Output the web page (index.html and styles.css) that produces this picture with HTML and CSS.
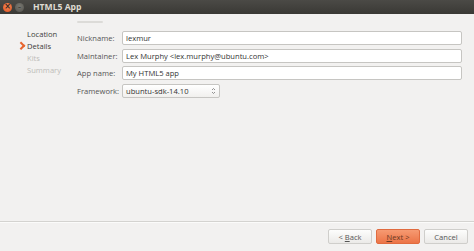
FILE: index.html
```html
<!DOCTYPE html>
<html>

<head>
  <meta charset="utf-8">
  <title>HTML5 App</title>
  <link rel="stylesheet" href="styles.css">
</head>

<body>
  <div class="window">
    <div class="titlebar">
      <span class="btn-close">&#215;</span>
      <span class="btn-min">&#8211;</span>
      <span class="title">HTML5 App</span>
    </div>
    <div class="main">
      <ul class="steps">
        <li>Location</li>
        <li class="current">Details</li>
        <li class="todo">Kits</li>
        <li class="todo">Summary</li>
      </ul>
      <div class="page">
        <div class="page-head"></div>
        <div class="form">
          <label>Nickname:</label>
          <div class="field">lexmur</div>
          <label>Maintainer:</label>
          <div class="field">Lex Murphy &lt;lex.murphy@ubuntu.com&gt;</div>
          <label>App name:</label>
          <div class="field">My HTML5 app</div>
          <label>Framework:</label>
          <div class="combo">
            <span>ubuntu-sdk-14.10</span>
            <svg width="5" height="8" viewBox="0 0 5 8">
              <path d="M1 3 L2.5 1.5 L4 3" fill="none" stroke="#777" stroke-width="0.8" />
              <path d="M1 5 L2.5 6.5 L4 5" fill="none" stroke="#777" stroke-width="0.8" />
            </svg>
          </div>
        </div>
      </div>
    </div>
    <div class="footer">
      <button>&lt; <u>B</u>ack</button>
      <button class="primary"><u>N</u>ext &gt;</button>
      <button>Cancel</button>
    </div>
  </div>
</body>

</html>
```

FILE: styles.css
```css
html,
body {
  margin: 0;
  width: 474px;
  height: 251px;
  overflow: hidden;
}

body {
  background: #f2f1f0;
  font-family: "Open Sans", "Noto Sans", sans-serif;
  font-size: 7.6px;
  color: #3c3c3c;
}

.window {
  height: 251px;
  display: flex;
  flex-direction: column;
}

.titlebar {
  height: 14px;
  background: linear-gradient(#4b4a46, #3a3935);
  display: flex;
  align-items: center;
  padding-left: 3px;
  box-sizing: border-box;
}

.btn-close,
.btn-min {
  width: 9px;
  height: 9px;
  border-radius: 50%;
  display: flex;
  align-items: center;
  justify-content: center;
  font-size: 8px;
  line-height: 1;
  font-family: "DejaVu Sans", sans-serif;
  font-weight: bold;
}

.btn-close {
  background: radial-gradient(circle at 50% 35%, #f58a5b, #e0521e);
  color: #3c2a20;
}

.btn-min {
  margin-left: 3px;
  background: radial-gradient(circle at 50% 35%, #77766f, #55544f);
  color: #3a3935;
  font-size: 6px;
}

.title {
  margin-left: 9px;
  color: #dfdbd2;
  font-weight: bold;
  font-size: 8.6px;
}

.main {
  flex: 1;
  display: flex;
}

.steps {
  list-style: none;
  margin: 0;
  padding: 14px 0 0 27px;
  width: 50px;
}

.steps li {
  line-height: 12px;
  position: relative;
}

/* orange chevron next to the current step */
.steps li.current::before {
  content: '';
  position: absolute;
  left: -9px;
  top: 3px;
  width: 3.5px;
  height: 3.5px;
  border-right: 2px solid #e8652f;
  border-bottom: 2px solid #e8652f;
  transform: rotate(-45deg);
}

.steps li.todo {
  color: #bdbcb9;
}

.page {
  flex: 1;
  padding-right: 12px;
}

.page-head {
  margin-top: 7px;
  width: 26px;
  height: 2px;
  background: #dcdbd8;
  border-radius: 1px;
}

.form {
  margin-top: 8px;
  display: grid;
  grid-template-columns: 45px 1fr;
  row-gap: 3.5px;
  align-items: center;
}

.form label {
  color: #555;
}

.field {
  height: 14px;
  box-sizing: border-box;
  border: 1px solid #c6c5c2;
  border-radius: 2px;
  background: #fff;
  padding-left: 3px;
  line-height: 12px;
  color: #333;
}

.combo {
  width: 98px;
  height: 14px;
  box-sizing: border-box;
  border: 1px solid #c6c5c2;
  border-radius: 2px;
  background: linear-gradient(#ffffff, #f1f0ee);
  display: flex;
  align-items: center;
  justify-content: space-between;
  padding: 0 3px;
  line-height: 12px;
  color: #333;
}

.footer {
  height: 28px;
  border-top: 1px solid #d4d3d0;
  box-shadow: inset 0 1px 0 #fbfbfa;
  display: flex;
  justify-content: flex-end;
  align-items: flex-start;
  gap: 4px;
  padding: 7px 6px 0 0;
  box-sizing: border-box;
  margin-bottom: 2px;
}

button {
  width: 44px;
  height: 15px;
  font-family: inherit;
  font-size: 7.6px;
  color: #555;
  border: 1px solid #cfcecb;
  border-radius: 2px;
  background: linear-gradient(#fdfdfc, #ebeae8);
  padding: 0;
}

button.primary {
  background: linear-gradient(#f69a72, #ec7447);
  border-color: #e06b3f;
  color: #6a3a24;
}
```
